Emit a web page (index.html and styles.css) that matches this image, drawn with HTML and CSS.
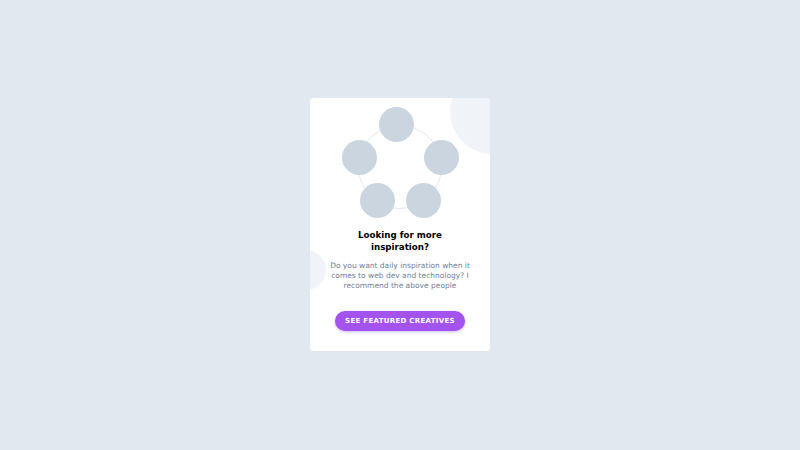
FILE: index.html
```html
<!DOCTYPE html>
<html>

<head>
	<title>Featured creatives</title>
	<meta charset="UTF-8" />

	<link rel="stylesheet" href="styles.css">
</head>

<body>

<div class="page">
	<div class="card">
		<span class="blob blob-top"></span>
		<span class="blob blob-left"></span>

		<div class="avatars">
			<span class="ring"></span>
			<span class="avatar a1"></span>
			<span class="avatar a2"></span>
			<span class="avatar a3"></span>
			<span class="avatar a4"></span>
			<span class="avatar a5"></span>
		</div>

		<h2 class="title">Looking for more inspiration?</h2>
		<p class="text">Do you want daily inspiration when it comes to web dev and technology? I recommend the above people</p>

		<a class="button" href="#">See featured creatives</a>
	</div>
</div>

</body>

</html>
```

FILE: styles.css
```css
html, body {
  margin: 0;
  height: 100%;
}

body {
  background: #e2e8f0;
  font-family: "DejaVu Sans", sans-serif;
}

.page {
  display: flex;
  justify-content: center;
  padding-top: 98px;
}

.card {
  position: relative;
  overflow: hidden;
  box-sizing: border-box;
  width: 180px;
  height: 253px;
  padding: 9px 16px 20px;
  background: #fff;
  border-radius: 4px;
  text-align: center;
}

.blob {
  position: absolute;
  border-radius: 50%;
  background: #f0f4f9;
}

.blob-top {
  left: 140px;
  top: -28px;
  width: 84px;
  height: 84px;
}

.blob-left {
  left: -24px;
  top: 152px;
  width: 40px;
  height: 40px;
}

.avatars {
  position: relative;
  width: 117px;
  height: 110px;
  margin-left: 16px;
}

.ring {
  position: absolute;
  left: 16px;
  top: 18px;
  width: 82px;
  height: 82px;
  border: 1px solid #e2e8f0;
  border-radius: 50%;
}

.avatar {
  position: absolute;
  width: 35px;
  height: 35px;
  border-radius: 50%;
  background: #cbd5e0;
}

.a1 { left: 37px; top: 0; }
.a2 { left: 0; top: 33px; }
.a3 { left: 82px; top: 33px; }
.a4 { left: 18px; top: 76px; }
.a5 { left: 64px; top: 76px; }

.title {
  position: relative;
  margin: 12px 22px 0;
  font-size: 8.7px;
  line-height: 12px;
  font-weight: bold;
  color: #000;
}

.text {
  position: relative;
  margin: 8px -6px 0;
  font-size: 7.5px;
  line-height: 10px;
  color: #718096;
}

.button {
  display: inline-block;
  margin-top: 20px;
  padding: 0 10px;
  height: 20px;
  line-height: 20px;
  border-radius: 10px;
  background: #a553ef;
  box-shadow: 0 1px 3px rgba(159, 122, 234, 0.5);
  color: #fff;
  font-size: 7px;
  font-weight: bold;
  letter-spacing: 0.3px;
  text-transform: uppercase;
  text-decoration: none;
}
```
